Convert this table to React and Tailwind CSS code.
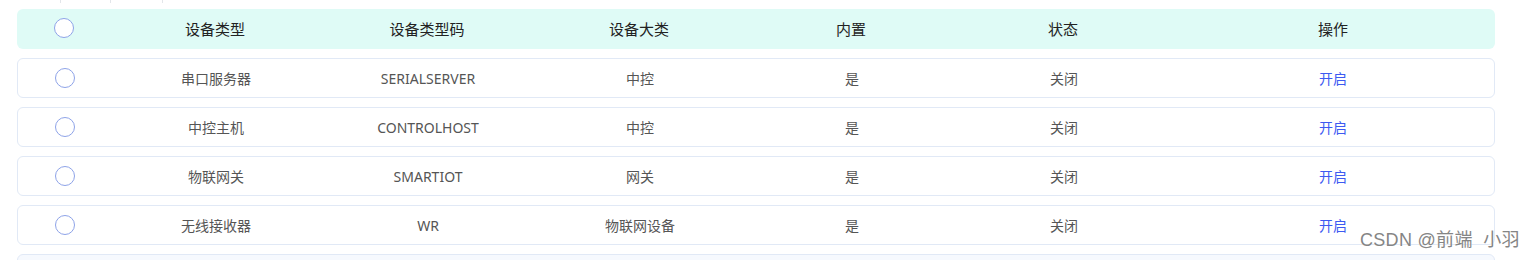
import React from "react";

const rows = [
  { name: "串口服务器", code: "SERIALSERVER", cat: "中控" },
  { name: "中控主机", code: "CONTROLHOST", cat: "中控" },
  { name: "物联网关", code: "SMARTIOT", cat: "网关" },
  { name: "无线接收器", code: "WR", cat: "物联网设备" },
];

const cols = "grid grid-cols-[92px_212px_212px_212px_212px_212px_1fr] items-center";

function Radio() {
  return <span className="block w-5 h-5 rounded-full border border-[#8ea3e8] bg-white" />;
}

export default function App() {
  return (
    <div
      className="w-[1532px] h-[260px] overflow-hidden bg-white relative"
      style={{ fontFamily: '"Noto Sans", "Noto Sans CJK SC", sans-serif' }}
    >
      {/* remnants of the toolbar above */}
      <div className="h-[9px]">
        <div className="flex h-[3px] ml-[60px]">
          <div className="w-[50px] border-l border-[#e3e6ea]" />
          <div className="w-[52px] border-l border-[#e3e6ea]" />
          <div className="border-l border-[#e3e6ea]" />
        </div>
      </div>

      <div className="ml-[17px] w-[1478px] flex flex-col gap-[9px]">
        <div className={`${cols} h-10 rounded-md bg-[#dffbf6] text-[15px] text-[#222]`}>
          <div className="flex justify-center -mt-[3px] pl-[1px]">
            <Radio />
          </div>
          <div className="text-center">设备类型</div>
          <div className="text-center">设备类型码</div>
          <div className="text-center">设备大类</div>
          <div className="text-center">内置</div>
          <div className="text-center">状态</div>
          <div className="text-center pl-[2px]">操作</div>
        </div>

        {rows.map((r) => (
          <div
            key={r.code}
            className={`${cols} h-10 rounded-md border border-[#e1e9f6] bg-white text-[14px] text-[#555] pt-[1px]`}
          >
            <div className="flex justify-center -mt-[2px] pl-[1px]">
              <Radio />
            </div>
            <div className="text-center">{r.name}</div>
            <div className="text-center">{r.code}</div>
            <div className="text-center">{r.cat}</div>
            <div className="text-center">是</div>
            <div className="text-center">关闭</div>
            <div className="text-center pl-[2px] text-[#3d5af1]">开启</div>
          </div>
        ))}

        <div className="h-10 rounded-md border border-[#e1e9f6] bg-[#f6f9fe]" />
      </div>

      <div
        className="absolute left-[1360px] top-[227px] text-[18px] text-[#858585] tracking-[0.3px] whitespace-pre [text-shadow:0_0_1px_#fff]"
        style={{ fontFamily: '"Liberation Sans", "Noto Sans CJK SC", sans-serif' }}
      >
        CSDN @前端  小羽
      </div>
    </div>
  );
}
